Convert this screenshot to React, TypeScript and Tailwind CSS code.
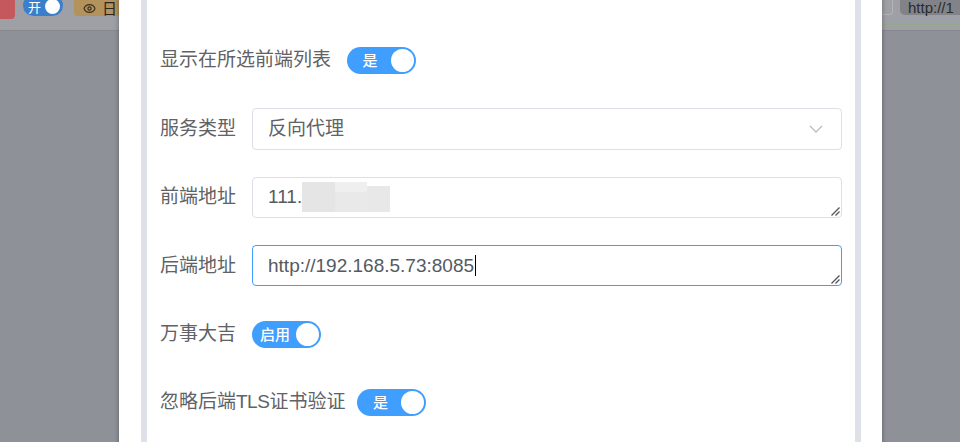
import React from "react";
import { Eye } from "lucide-react";

const FONT = { fontFamily: '"Liberation Sans", "Noto Sans CJK SC", sans-serif' };

function Switch({ text }: { text: string }) {
    return (
        <div className="flex h-[27px] w-[69px] shrink-0 items-center rounded-full bg-[#409eff] pr-[2px]">
            <span className="flex-1 pl-[2px] text-center text-[15px] font-medium leading-none text-white">{text}</span>
            <span className="size-[23px] rounded-full bg-white" />
        </div>
    );
}

function Grip() {
    return (
        <svg className="absolute bottom-[1px] right-[1px] size-[10px]" viewBox="0 0 10 10" fill="none" stroke="#555" strokeWidth="1.2">
            <line x1="9.5" y1="1.5" x2="1.5" y2="9.5" />
            <line x1="9.5" y1="5.5" x2="5.5" y2="9.5" />
        </svg>
    );
}

function Row({ label, tight, children }: { label: React.ReactNode; tight?: boolean; children: React.ReactNode }) {
    return (
        <div className="flex h-[68.4px] items-center">
            <span className={`${tight ? "mr-[12px]" : "mr-4"} shrink-0 whitespace-nowrap text-[19px] text-[#606266]`}>{label}</span>
            {children}
        </div>
    );
}

export default function App() {
    return (
        <div className="relative h-[442px] w-[960px] overflow-hidden bg-[#8e9198]" style={FONT}>
            {/* page behind the mask */}
            <div className="flex h-[31px] justify-between border-b border-[#86888e] bg-[#9ea0a6]">
                <div className="flex items-start">
                    <div className="h-[19px] w-[15px] rounded-br-[4px] bg-[#c4585c]" />
                    <div className="ml-[8px] -mt-[5px] flex h-[21px] w-[40px] items-center rounded-full bg-[#3a7fcb] pl-[5px] pr-[3px]">
                        <span className="flex-1 pt-[3px] text-[13px] leading-none text-white">开</span>
                        <span className="mt-[1px] size-[15px] rounded-full bg-white" />
                    </div>
                    <div className="ml-[11px] flex h-[16px] w-[48px] items-center gap-[6px] rounded-bl-[4px] bg-[#b3925c] pl-[9px]">
                        <Eye className="size-[13px] text-[#3a3024]" strokeWidth={2.2} />
                        <span className="text-[15px] leading-none text-[#2a2520]">日</span>
                    </div>
                </div>
                <div className="flex w-[78px] flex-col">
                    <div className="flex h-[16px] items-start">
                        <div className="h-[15px] w-[11px] rounded-br-[4px] border-b border-r border-[#b1b3b8]" />
                        <div className="ml-[7px] flex h-[15px] flex-1 items-end rounded-bl-[5px] bg-[#818388] pl-[8px] text-[15px] leading-none text-[#2a2b2e]">
                            http://1
                        </div>
                    </div>
                    <div className="mt-[8px] h-px bg-[#8fa98a]" />
                </div>
            </div>

            {/* dialog */}
            <div className="absolute left-[119px] top-[-42px] h-[500px] w-[763px] bg-white pl-[22px] pr-[21px] shadow-[0_0_5px_rgba(0,0,0,0.35)]">
                <div className="h-full border-x-[6px] border-[#dfe1e9] pl-[13px] pr-[13px]">
                    <Row label="操作模式">
                        <div className="ml-[3px] flex items-center">
                            <span className="flex size-[14px] items-center justify-center rounded-full bg-[#409eff]">
                                <span className="size-[5px] rounded-full bg-white" />
                            </span>
                            <span className="ml-[11px] text-[19px] text-[#409eff]">转发模式</span>
                            <span className="ml-[42px] size-[14px] rounded-full border border-[#dcdfe6] bg-white" />
                            <span className="ml-[8px] text-[19px] text-[#606266]">跳转模式</span>
                        </div>
                    </Row>

                    <Row label="显示在所选前端列表">
                        <Switch text="是" />
                    </Row>

                    <Row label="服务类型">
                        <div className="flex h-[42px] flex-1 items-center rounded-[4px] border border-[#dcdfe6] pl-[15px] pr-[18px]">
                            <span className="flex-1 text-[19px] text-[#606266]">反向代理</span>
                            <svg width="14" height="8" viewBox="0 0 14 8" fill="none" stroke="#b8bcc4" strokeWidth="1.3">
                                <path d="M1 1 L7 7 L13 1" />
                            </svg>
                        </div>
                    </Row>

                    <Row label="前端地址">
                        <div className="relative flex h-[41px] flex-1 items-center rounded-[4px] border border-[#dcdfe6] pl-[15px]">
                            <span className="text-[19px] text-[#555a60]">111.</span>
                            <span className="flex h-[30px] items-stretch">
                                <span className="w-[33px] bg-[#e5e5e5]" />
                                <span className="flex w-[32px] flex-col">
                                    <span className="h-[10px] bg-[#efefef]" />
                                    <span className="flex-1 bg-[#e9e9e9]" />
                                </span>
                                <span className="mt-[4px] w-[23px] bg-[#e8e8e8]" />
                            </span>
                            <Grip />
                        </div>
                    </Row>

                    <Row label="后端地址">
                        <div className="relative flex h-[41px] flex-1 items-center rounded-[4px] border border-[#409eff] pl-[15px]">
                            <span className="text-[19px] text-[#555a60]">http://192.168.5.73:8085</span>
                            <span className="ml-[1px] h-[21px] w-px bg-black" />
                            <Grip />
                        </div>
                    </Row>

                    <Row label="万事大吉">
                        <Switch text="启用" />
                    </Row>

                    <Row
                        tight
                        label={
                            <>
                                忽略后端<span className="tracking-[-0.5px]">TLS</span>证书验证
                            </>
                        }
                    >
                        <Switch text="是" />
                    </Row>
                </div>
            </div>
        </div>
    );
}
